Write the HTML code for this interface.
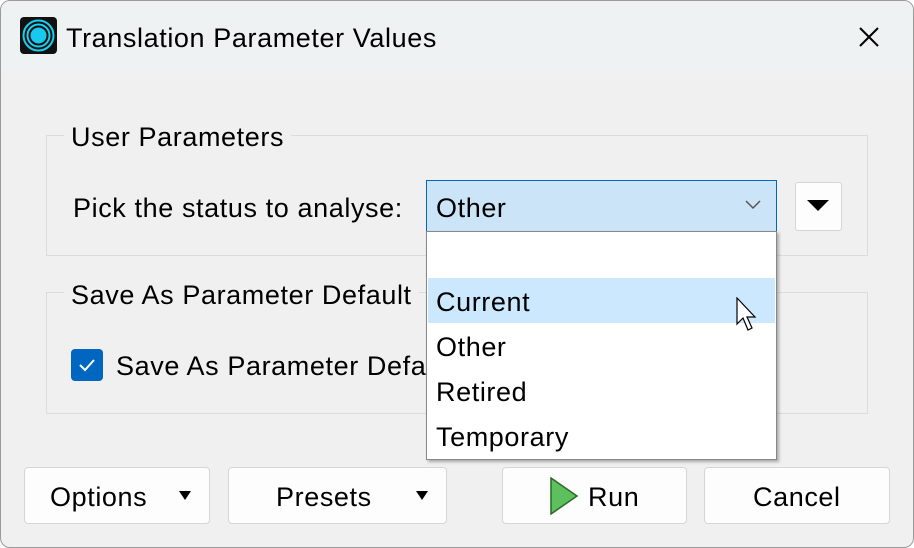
<html><head><style>
body{margin:0;width:914px;height:548px;background:#fff;font-family:"Liberation Sans",sans-serif;color:#000;position:relative;overflow:hidden}
.win{position:absolute;left:0;top:0;width:912px;height:546px;border:1px solid #9a9a9a;border-radius:10px;background:#f0f0f0;overflow:hidden}
.title{position:absolute;left:0;top:0;width:912px;height:72px;background:#eef2f3}
.t{position:absolute;font-size:27px;letter-spacing:0.6px;white-space:nowrap;line-height:1}
.grp{position:absolute;border:1px solid #dcdcdc}
.btn{position:absolute;background:#fdfdfd;border:1px solid #d6d6d6;border-radius:4px;box-sizing:border-box}
.tri{position:absolute;width:0;height:0;border-left:6px solid transparent;border-right:6px solid transparent;border-top:9px solid #000}
</style></head><body><div class="win">
<div class="title"></div>
<div style="position:absolute;left:19px;top:16px;width:37px;height:37px;background:#111;border-radius:4px"></div>
<svg style="position:absolute;left:19px;top:16px" width="37" height="37"><circle cx="18.5" cy="18.5" r="15" fill="none" stroke="#1ad0f0" stroke-width="2"/><circle cx="18.5" cy="18.5" r="11" fill="none" stroke="#1ad0f0" stroke-width="2"/><circle cx="18.5" cy="18.5" r="8" fill="#18c8ee"/></svg>
<div class="t" style="left:65px;top:24px">Translation Parameter Values</div>
<svg style="position:absolute;left:858px;top:26px" width="20" height="20"><path d="M1 1L19 19M19 1L1 19" stroke="#000" stroke-width="2"/></svg>
<div class="grp" style="left:45px;top:134px;width:820px;height:119px"></div>
<div class="t" style="left:63px;top:123px;background:#f0f0f0;padding:0 7px">User Parameters</div>
<div class="t" style="left:72px;top:194px">Pick the status to analyse:</div>
<div style="position:absolute;left:425px;top:179px;width:349px;height:50px;background:#cce4f7;border:1px solid #0067c0"></div>
<div class="t" style="left:435px;top:194px">Other</div>
<svg style="position:absolute;left:744px;top:199px" width="16" height="10"><path d="M1 1L8 8L15 1" stroke="#555" stroke-width="1.5" fill="none"/></svg>
<div class="btn" style="left:794px;top:181px;width:47px;height:49px;border-radius:3px"></div>
<div class="tri" style="left:806px;top:199px;border-left-width:11px;border-right-width:11px;border-top-width:11px"></div>
<div class="grp" style="left:45px;top:291px;width:820px;height:120px"></div>
<div class="t" style="left:63px;top:281px;background:#f0f0f0;padding:0 7px">Save As Parameter Default</div>
<div style="position:absolute;left:70px;top:348px;width:32px;height:32px;background:#0067c0;border-radius:4px"></div>
<svg style="position:absolute;left:70px;top:348px" width="32" height="32"><path d="M9 16L14 21L23 11" stroke="#fff" stroke-width="2" fill="none"/></svg>
<div class="t" style="left:115px;top:352px">Save As Parameter Defa</div>
<div style="position:absolute;left:425px;top:230px;width:349px;height:227px;background:#fff;border:1px solid #888;box-shadow:2px 2px 3px rgba(0,0,0,.3)"></div>
<div style="position:absolute;left:427px;top:277px;width:347px;height:45px;background:#cce8ff"></div>
<div class="t" style="left:435px;top:288px">Current</div>
<div class="t" style="left:435px;top:333px">Other</div>
<div class="t" style="left:435px;top:378px">Retired</div>
<div class="t" style="left:435px;top:423px">Temporary</div>
<svg style="position:absolute;left:735px;top:296px" width="28" height="40"><path d="M1 1L1 27L7 21L12 33L16 31L11 20L19 20Z" fill="#fff" stroke="#000" stroke-width="1.2"/></svg>
<div class="btn" style="left:23px;top:466px;width:186px;height:57px"></div>
<div class="t" style="left:49px;top:483px">Options</div>
<div class="tri" style="left:178px;top:490px"></div>
<div class="btn" style="left:227px;top:466px;width:219px;height:57px"></div>
<div class="t" style="left:275px;top:483px">Presets</div>
<div class="tri" style="left:415px;top:490px"></div>
<div class="btn" style="left:501px;top:466px;width:185px;height:57px"></div>
<svg style="position:absolute;left:549px;top:476px" width="30" height="38"><path d="M1 1L27 19L1 37Z" fill="#5cc05c" stroke="#2a6a2a" stroke-width="1.5"/></svg>
<div class="t" style="left:587px;top:483px">Run</div>
<div class="btn" style="left:703px;top:466px;width:186px;height:57px"></div>
<div class="t" style="left:752px;top:483px">Cancel</div>
</div></body></html>
